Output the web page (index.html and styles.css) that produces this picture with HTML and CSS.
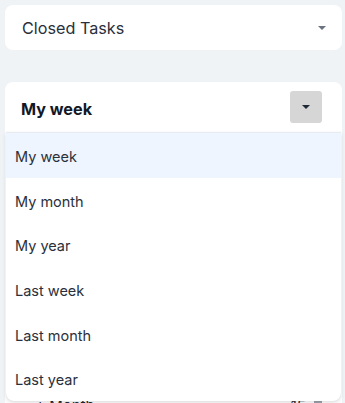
FILE: index.html
```html
<!DOCTYPE html>
<html>
<head>
<meta charset="utf-8">
<link rel="stylesheet" href="styles.css">
</head>
<body>
<div class="page">
  <div class="card select">
    <span class="select-label">Closed Tasks</span>
    <span class="caret caret-light"></span>
  </div>

  <div class="card panel">
    <div class="panel-head">
      <span class="panel-title">My week</span>
      <button class="toggle"><span class="caret caret-dark"></span></button>
    </div>
    <div class="rows">
      <div class="row"><span>+ + Month</span><span class="num">15 <span class="mini"></span></span></div>
    </div>
    <ul class="menu">
      <li class="item active">My week</li>
      <li class="item">My month</li>
      <li class="item">My year</li>
      <li class="item">Last week</li>
      <li class="item">Last month</li>
      <li class="item">Last year</li>
    </ul>
  </div>
</div>
</body>
</html>
```
FILE: styles.css
```css
html, body {
  margin: 0;
  padding: 0;
  background: #f0f3f6;
  font-family: Inter, "Noto Sans", Arial, sans-serif;
  overflow: hidden;
}
.page {
  padding: 5px 3px 0 5px;
  display: flex;
  flex-direction: column;
  gap: 32px;
}
.card {
  background: #ffffff;
  border-radius: 8px;
}
.select {
  height: 45px;
  display: flex;
  align-items: center;
  justify-content: space-between;
  padding: 0 16px 0 17px;
}
.select-label {
  font-size: 16.2px;
  color: #2a303b;
}
.caret {
  display: inline-block;
  width: 0;
  height: 0;
  border-left: 4.5px solid transparent;
  border-right: 4.5px solid transparent;
  border-top: 4.5px solid #6b7280;
}
.caret-dark {
  border-left-width: 4px;
  border-right-width: 4px;
  border-top: 4px solid #1f2937;
}
.panel {
  position: relative;
  height: 340px;
  border-radius: 8px 8px 0 0;
}
.panel-head {
  height: 50px;
  display: flex;
  align-items: center;
  justify-content: space-between;
  padding: 0 20px 0 16px;
}
.panel-title {
  font-size: 16.2px;
  font-weight: 700;
  color: #111827;
  padding-top: 4px;
}
.toggle {
  width: 32px;
  height: 32px;
  border: none;
  border-radius: 3px;
  background: #d6d6d6;
  display: flex;
  align-items: center;
  justify-content: center;
  padding: 0;
}
.rows {
  display: flex;
  flex-direction: column;
  padding-top: 252px;
}
.row {
  height: 42px;
  display: flex;
  align-items: center;
  justify-content: space-between;
  padding: 0 20px 0 16px;
  font-size: 15px;
  color: #1f2937;
}
.num {
  display: flex;
  align-items: center;
  gap: 8px;
}
.mini {
  width: 8px;
  height: 12px;
  background: #9ca3af;
  border-radius: 1px;
}
.menu {
  position: absolute;
  top: 50px;
  left: 1px;
  right: 1px;
  margin: 0;
  padding: 0;
  list-style: none;
  background: #ffffff;
  border-top: 1px solid #e8ebef;
  border-radius: 0 0 8px 8px;
  box-shadow: 0 2px 4px rgba(0, 0, 0, 0.12), 0 0 1px rgba(0, 0, 0, 0.1);
}
.item {
  height: 44.6px;
  display: flex;
  align-items: center;
  padding: 3px 0 0 9px;
  box-sizing: border-box;
  font-size: 14.5px;
  color: #2a303b;
}
.item.active {
  background: #eef5fe;
}
```
